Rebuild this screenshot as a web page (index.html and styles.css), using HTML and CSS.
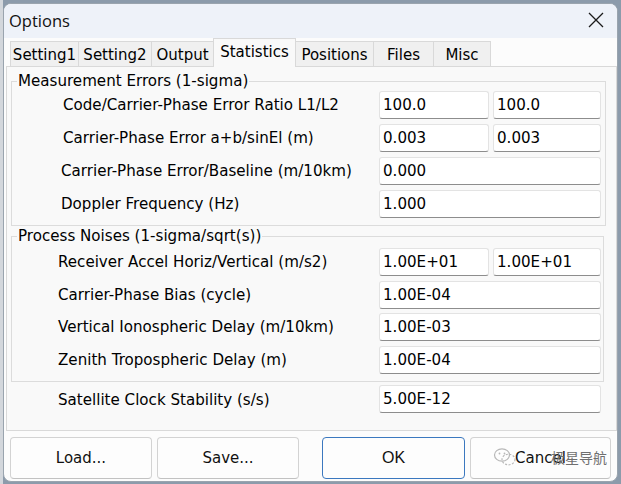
FILE: index.html
```html
<!DOCTYPE html>
<html>
<head>
<meta charset="utf-8">
<link rel="stylesheet" href="styles.css">
</head>
<body>
<div class="window">
  <div class="titlebar">
    <span class="title">Options</span>
    <svg class="close" width="16" height="16" viewBox="0 0 16 16"><path d="M1 1 L15 15 M15 1 L1 15" stroke="#1b1b1b" stroke-width="1.3" fill="none"/></svg>
  </div>
  <div class="tabs">
    <div class="tab t-s1">Setting1</div>
    <div class="tab t-s2">Setting2</div>
    <div class="tab t-out">Output</div>
    <div class="tab active t-stat">Statistics</div>
    <div class="tab t-pos">Positions</div>
    <div class="tab t-files">Files</div>
    <div class="tab t-misc">Misc</div>
  </div>
  <div class="panel">
    <fieldset class="group g1">
      <legend>Measurement Errors (1-sigma)</legend>
      <div class="row"><span class="lbl la">Code/Carrier-Phase Error Ratio L1/L2</span><div class="field">100.0</div><div class="field">100.0</div></div>
      <div class="row"><span class="lbl la">Carrier-Phase Error a+b/sinEl (m)</span><div class="field">0.003</div><div class="field">0.003</div></div>
      <div class="row"><span class="lbl lb">Carrier-Phase Error/Baseline (m/10km)</span><div class="field wide">0.000</div></div>
      <div class="row"><span class="lbl lb">Doppler Frequency (Hz)</span><div class="field wide">1.000</div></div>
    </fieldset>
    <fieldset class="group g2">
      <legend>Process Noises (1-sigma/sqrt(s))</legend>
      <div class="row"><span class="lbl lc">Receiver Accel Horiz/Vertical (m/s2)</span><div class="field">1.00E+01</div><div class="field">1.00E+01</div></div>
      <div class="row"><span class="lbl lc">Carrier-Phase Bias (cycle)</span><div class="field wide">1.00E-04</div></div>
      <div class="row"><span class="lbl lc">Vertical Ionospheric Delay (m/10km)</span><div class="field wide">1.00E-03</div></div>
      <div class="row"><span class="lbl lc">Zenith Tropospheric Delay (m)</span><div class="field wide">1.00E-04</div></div>
    </fieldset>
    <div class="row solo"><span class="lbl ld">Satellite Clock Stability (s/s)</span><div class="field wide">5.00E-12</div></div>
  </div>
  <div class="buttons">
    <div class="btn b-load">Load...</div>
    <div class="btn b-save">Save...</div>
    <div class="btn primary b-ok">OK</div>
    <div class="btn b-cancel">Cancel
      <span class="watermark">
        <svg width="24" height="20" viewBox="0 0 24 20"><ellipse cx="9" cy="8" rx="7.5" ry="6.2" fill="none" stroke="#b8b8b8" stroke-width="1.2"/><ellipse cx="15.5" cy="12.5" rx="6.5" ry="5.3" fill="none" stroke="#b8b8b8" stroke-width="1.2" stroke-dasharray="2 1.5"/><circle cx="6.5" cy="6.5" r="0.9" fill="#b8b8b8"/><circle cx="11.5" cy="6.5" r="0.9" fill="#b8b8b8"/></svg>
        <span class="wm-text">极星导航</span>
      </span>
    </div>
  </div>
</div>
</body>
</html>
```
FILE: styles.css
```css
html, body {
  margin: 0;
  padding: 0;
}
body {
  width: 621px;
  height: 484px;
  overflow: hidden;
  background: linear-gradient(90deg, #d3d7dc 0, #d3d7dc 3px, #8c9bab 3px, #8c9bab 100%);
  font-family: "DejaVu Sans", sans-serif;
  color: #000;
}
.window {
  margin: 3px 0 0 3px;
  width: 613px;
  height: 477px;
  border: 1px solid #9aa4ae;
  border-radius: 8px;
  background: #fcfcfc;
  overflow: hidden;
  display: flex;
  flex-direction: column;
}
.titlebar {
  box-sizing: border-box;
  height: 34px;
  flex: none;
  background: #eef2f9;
  display: flex;
  align-items: center;
  justify-content: space-between;
  padding: 0 13px 2px 5px;
}
.title {
  font-family: "Open Sans", "Noto Sans", sans-serif;
  font-size: 16.5px;
  color: #111;
}
.close {
  display: block;
}
.tabs {
  height: 28px;
  flex: none;
  display: flex;
  align-items: flex-end;
  padding-left: 6px;
  background: #fcfcfc;
  position: relative;
  z-index: 1;
}
.tab {
  box-sizing: border-box;
  height: 25px;
  border: 1px solid #d9d9d9;
  border-bottom: none;
  border-right: none;
  background: #f0f0f0;
  font-size: 15px;
  display: flex;
  align-items: center;
  justify-content: center;
  padding-top: 1px;
}
.tab.t-misc { border-right: 1px solid #d9d9d9; }
.tab.active {
  height: 29px;
  margin-bottom: -1px;
  background: #f9f9f9;
  border-right: 1px solid #d9d9d9;
  padding-bottom: 3px;
}
.tab.active + .tab { border-left: none; }
.t-s1 { width: 68px; }
.t-s2 { width: 73px; }
.t-out { width: 62px; }
.t-stat { width: 83px; }
.t-pos { width: 77px; }
.t-files { width: 60px; }
.t-misc { width: 58px; }

.panel {
  box-sizing: border-box;
  height: 365px;
  flex: none;
  margin-left: 2px;
  border: 1px solid #d9d9d9;
  background: #f9f9f9;
}
.group {
  margin: 0;
  border: 1px solid #dcdcdc;
  font-size: 15.1px;
  min-width: 0;
}
.group legend {
  padding: 0 1px;
  margin-left: 5px;
  line-height: 18px;
  color: #000;
}
.g1 {
  margin: 5px 10px 0 4px;
  padding: 1px 4px 7px 0;
}
.g2 {
  margin: 1px 12px 0 4px;
  padding: 3px 2px 7px 0;
}
.row {
  display: grid;
  grid-template-columns: 1fr 110px 108px;
  column-gap: 4px;
  align-items: center;
  height: 28px;
  font-size: 15.1px;
}
.row + .row { margin-top: 5px; }
.g2 .row + .row { margin-top: 4.5px; }
.lbl { white-space: nowrap; }
.la { padding-left: 51px; }
.lb { padding-left: 49px; }
.lc { padding-left: 46px; }
.ld { padding-left: 47px; }
.solo {
  margin: 3px 15px 0 4px;
}
.solo .lbl { padding-top: 3px; }
.field {
  box-sizing: border-box;
  height: 28px;
  background: #fff;
  border: 1px solid #e3e3e3;
  border-bottom: 1px solid #8d8d8d;
  border-radius: 3px;
  padding: 0 3px;
  display: flex;
  align-items: center;
}
.field.wide { grid-column: 2 / 4; }

.buttons {
  display: flex;
  padding: 6px 0 0 6px;
  gap: 5px;
}
.btn {
  box-sizing: border-box;
  height: 42px;
  border: 1px solid #d3d3d3;
  border-bottom-color: #c2c2c2;
  border-radius: 4px;
  background: #fdfdfd;
  font-size: 15px;
  display: flex;
  align-items: center;
  justify-content: center;
  color: #111;
}
.b-load, .b-save { width: 142px; }
.b-ok {
  width: 143px;
  margin-left: 18px;
  font-family: "Liberation Sans", Arial, sans-serif;
  font-size: 16px;
}
.btn.primary { border: 1px solid #3b78bf; background: #fdfdfd; }
.b-cancel {
  width: 141px;
  position: relative;
}
.watermark {
  position: absolute;
  left: 22px;
  top: 9px;
  display: flex;
  align-items: center;
  gap: 22px;
}
.watermark svg { display: block; }
.wm-text {
  font-family: "Noto Sans CJK SC", sans-serif;
  font-size: 14px;
  color: #6f6f6f;
  margin-left: 12px;
}
```
